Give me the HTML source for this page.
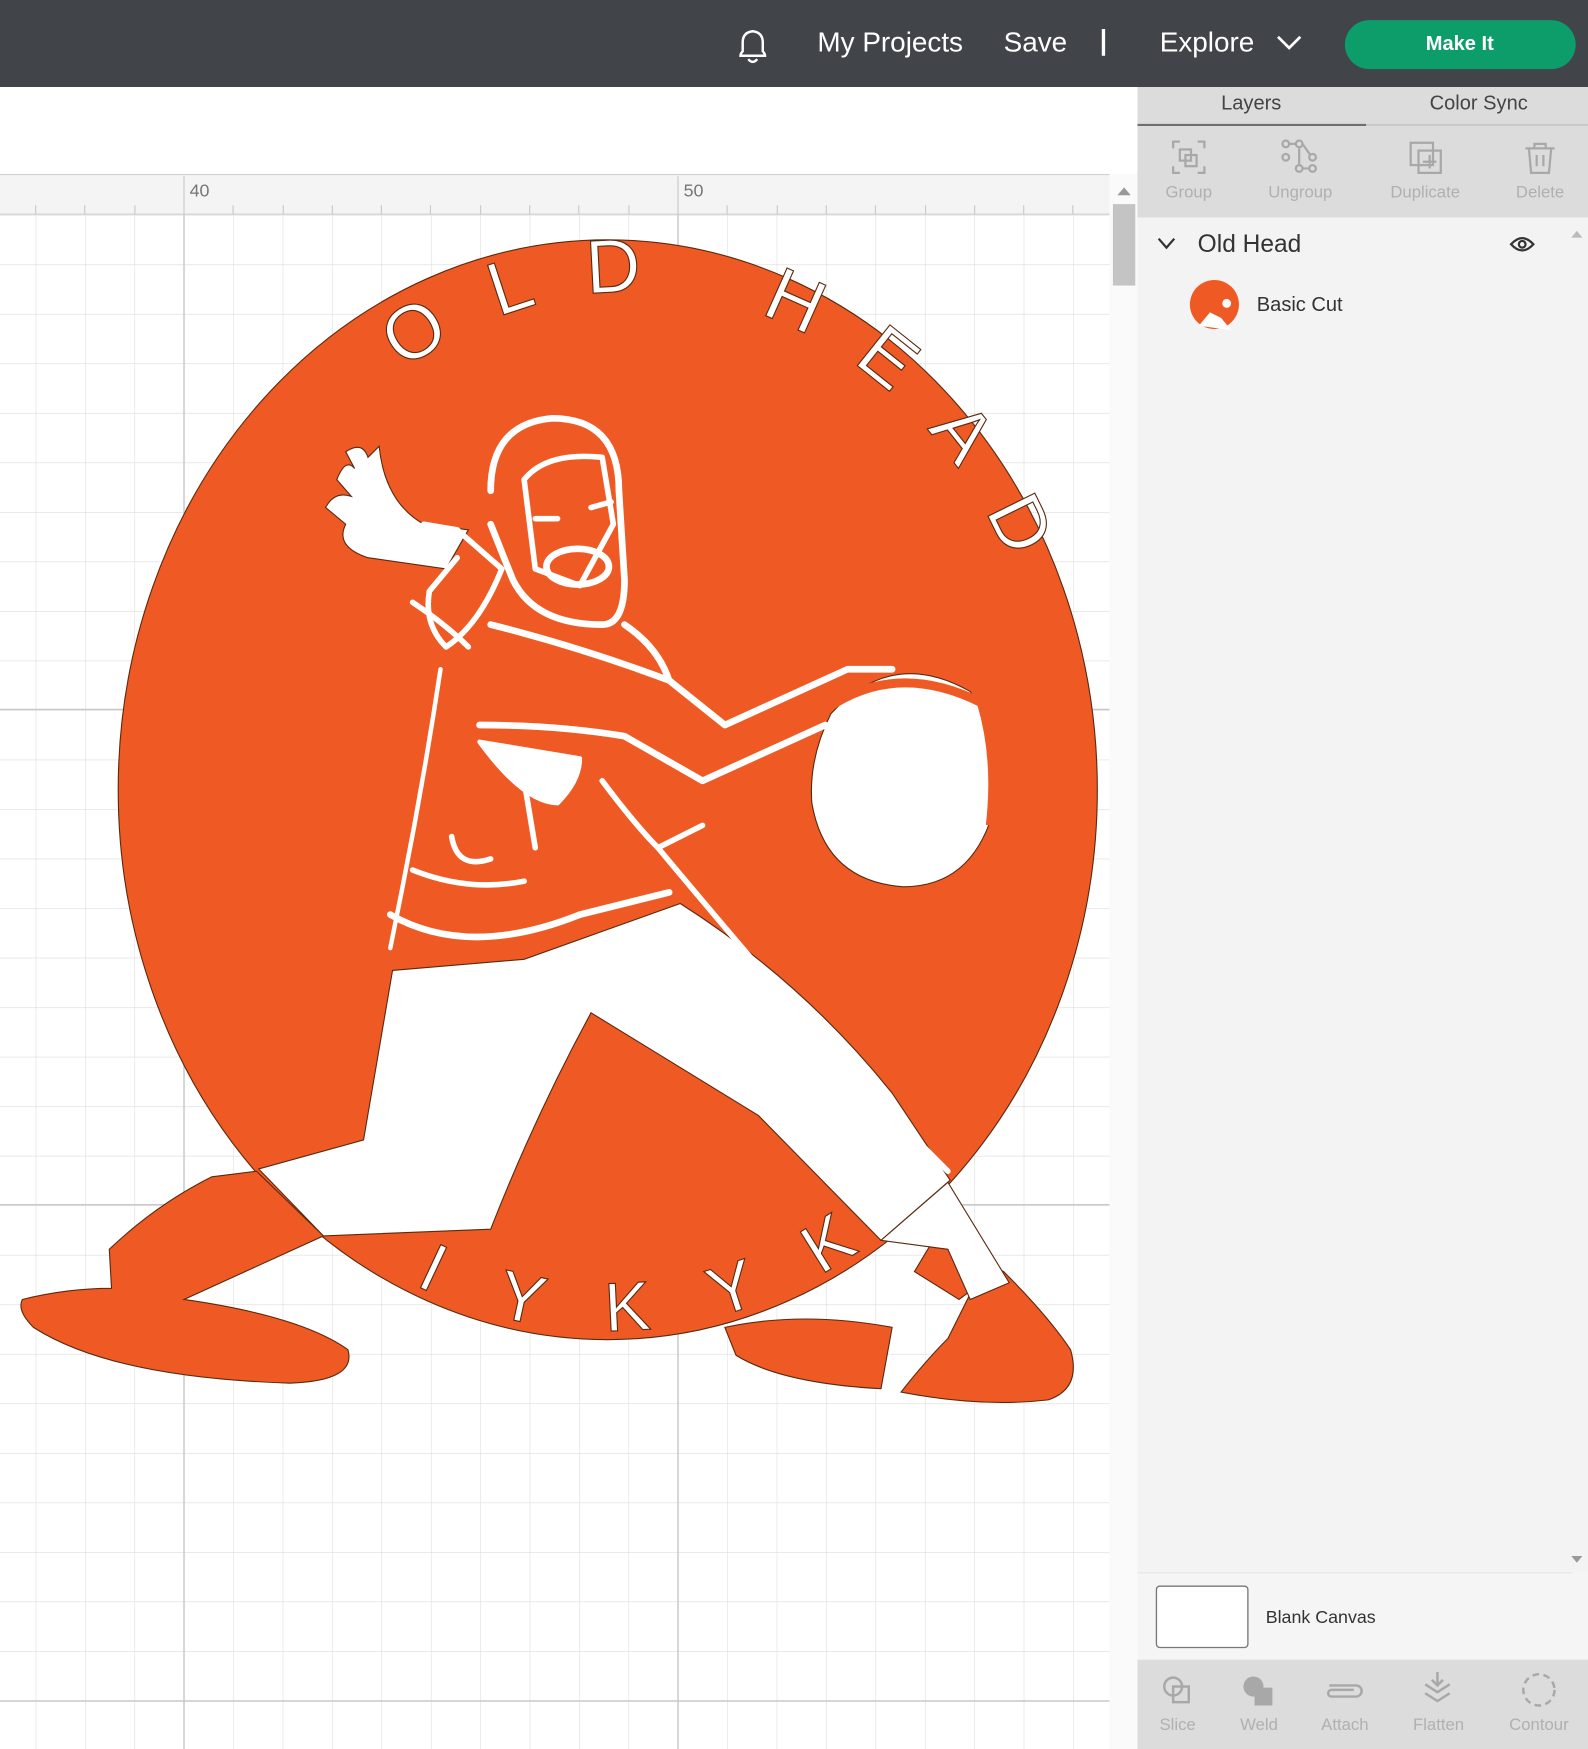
<!DOCTYPE html>
<html><head><style>
html,body{margin:0;padding:0;width:1588px;height:1749px;overflow:hidden;background:#fff}
svg{display:block}
text{font-family:"Liberation Sans",sans-serif}
</style></head><body>
<svg width="1588" height="1749" viewBox="0 0 1424 1568" preserveAspectRatio="none" xmlns="http://www.w3.org/2000/svg">
<defs>
<pattern id="g" x="32" y="15" width="44.3" height="44.4" patternUnits="userSpaceOnUse">
<path d="M0 0V44.4M0 0H44.3" stroke="#dcdcdc" stroke-width="1" fill="none"/>
</pattern>
<path id="arcTop" d="M362 332 A375 430 0 0 1 925 560"/>
<path id="arcBot" d="M372 1152 A430 485 0 0 0 775 1118"/>
</defs>
<rect x="0" y="78" width="1020" height="1490" fill="#fff"/>
<rect x="0" y="192" width="995" height="1376" fill="url(#g)"/>
<g stroke="#c8c8c8" stroke-width="1.3">
<line x1="165" y1="156" x2="165" y2="1568"/><line x1="608" y1="156" x2="608" y2="1568"/>
<line x1="0" y1="636" x2="995" y2="636"/><line x1="0" y1="1080" x2="995" y2="1080"/><line x1="0" y1="1525" x2="995" y2="1525"/>
</g>
<rect x="0" y="156" width="995" height="36" fill="#f4f4f4"/>
<line x1="0" y1="156.5" x2="995" y2="156.5" stroke="#d0d0d0"/>
<line x1="0" y1="192" x2="995" y2="192" stroke="#d0d0d0"/>
<g stroke="#c8c8c8"><line x1="32" y1="184" x2="32" y2="192"/><line x1="76" y1="184" x2="76" y2="192"/><line x1="121" y1="184" x2="121" y2="192"/><line x1="165" y1="158" x2="165" y2="192"/><line x1="209" y1="184" x2="209" y2="192"/><line x1="254" y1="184" x2="254" y2="192"/><line x1="298" y1="184" x2="298" y2="192"/><line x1="342" y1="184" x2="342" y2="192"/><line x1="386" y1="184" x2="386" y2="192"/><line x1="431" y1="184" x2="431" y2="192"/><line x1="475" y1="184" x2="475" y2="192"/><line x1="519" y1="184" x2="519" y2="192"/><line x1="564" y1="184" x2="564" y2="192"/><line x1="608" y1="158" x2="608" y2="192"/><line x1="652" y1="184" x2="652" y2="192"/><line x1="697" y1="184" x2="697" y2="192"/><line x1="741" y1="184" x2="741" y2="192"/><line x1="785" y1="184" x2="785" y2="192"/><line x1="830" y1="184" x2="830" y2="192"/><line x1="874" y1="184" x2="874" y2="192"/><line x1="918" y1="184" x2="918" y2="192"/><line x1="962" y1="184" x2="962" y2="192"/></g>
<text x="170" y="176" font-size="16" fill="#777">40</text>
<text x="613" y="176" font-size="16" fill="#777">50</text>
<rect x="995" y="156" width="25" height="1412" fill="#fafafa"/>
<rect x="998" y="183" width="20" height="73" fill="#c4c4c4"/>
<path d="M1002 175 L1008 168 L1014 175Z" fill="#999"/>

<g stroke="#5a2a10" stroke-width="1">
<ellipse cx="545" cy="708" rx="439" ry="493" fill="#ef5a24"/>
<path d="M20 1165 Q60 1155 100 1155 L98 1120 Q140 1080 190 1055 L230 1050 L290 1108 L165 1165 Q270 1180 312 1210 Q320 1238 260 1240 Q100 1235 30 1190 Q15 1175 20 1165Z" fill="#ef5a24"/>
<path d="M650 1190 Q720 1175 800 1190 L790 1245 Q700 1240 660 1215Z" fill="#ef5a24"/>
<path d="M808 1248 Q830 1220 850 1200 L870 1160 L860 1120 L900 1140 Q940 1180 960 1210 Q970 1245 940 1255 Q880 1262 808 1248Z" fill="#ef5a24"/>
<path d="M820 1140 L850 1090 L880 1150 L860 1165Z" fill="#ef5a24"/>
</g>
<path d="M352 870 L326 1022 L232 1048 L290 1108 L440 1102 Q480 1000 530 908 L680 1000 L790 1112 L852 1058 L800 980 Q720 880 610 810 L470 860Z" fill="#fff" stroke="#5a2a10" stroke-width="1"/>
<path d="M790 1112 L850 1060 L905 1150 L870 1165 L850 1120Z" fill="#fff" stroke="#5a2a10"/>
<path d="M745 640 Q800 580 870 620 Q900 660 890 730 Q870 795 810 795 Q740 790 728 720 Q725 680 745 640Z" fill="#fff" stroke="#5a2a10"/>
<path d="M735 640 Q800 590 880 630 Q895 680 888 740" fill="none" stroke="#ef5a24" stroke-width="8"/>
<path d="M340 400 Q345 450 380 470 L420 475 L400 510 L330 500 Q300 490 310 470 L292 455 Q300 440 315 445 L302 430 Q310 410 318 420 L310 405 Q325 395 330 410Z" fill="#fff" stroke="#5a2a10"/>
<g fill="none" stroke="#fff" stroke-linecap="round" stroke-linejoin="round">
<path d="M440 440 Q440 380 495 375 Q555 375 555 440 L560 520 Q560 560 540 560 Q480 560 460 520 L440 470" stroke-width="6"/>
<path d="M470 430 Q490 405 540 410 L550 470 L520 525 L480 510Z" stroke-width="5"/>
<ellipse cx="518" cy="508" rx="28" ry="16" stroke-width="6"/>
<path d="M480 465 L500 465 M530 455 L548 450" stroke-width="5"/>
<path d="M380 470 L410 475 L450 510 Q430 560 400 580 Q380 560 385 530 L410 500" stroke-width="5"/>
<path d="M440 560 Q520 580 600 610 L650 650 L760 600 L800 600" stroke-width="6"/>
<path d="M430 650 Q500 650 560 660 L630 700 L740 650" stroke-width="6"/>
<path d="M560 560 Q590 580 600 610" stroke-width="6"/>
<path d="M395 600 Q380 700 360 800 L350 850" stroke-width="4"/>
<path d="M430 665 Q470 720 500 720 Q520 700 520 680 Z" fill="#fff" stroke-width="4"/>
<path d="M540 700 Q570 740 590 760 L630 740" stroke-width="5"/>
<path d="M350 820 Q420 860 520 820 L600 800" stroke-width="6"/>
<path d="M370 780 Q420 800 470 790" stroke-width="5"/>
<path d="M405 750 Q410 780 440 770 M470 700 L480 760" stroke-width="5"/>
<path d="M590 760 Q640 820 700 890 Q760 960 850 1050" stroke-width="5"/>
<path d="M370 540 Q400 560 420 580" stroke-width="5"/>
</g>
<g font-size="68" fill="#fff" stroke="#5a2a10" stroke-width="1">
<text><textPath href="#arcTop" textLength="660" lengthAdjust="spacing">OLD HEAD</textPath></text>
</g>
<g font-size="62" fill="#fff" stroke="#5a2a10" stroke-width="1">
<text><textPath href="#arcBot" textLength="420" lengthAdjust="spacing">IYKYK</textPath></text>
</g>

<rect x="0" y="0" width="1424" height="78" fill="#414449"/>
<path d="M664 50 Q664 48 666 46 L666 38 Q666 29 675 28 Q684 29 684 38 L684 46 Q686 48 686 50Z M671 53 Q675 58 679 53" fill="none" stroke="#fff" stroke-width="2.2"/>
<text x="733" y="46" font-size="25" fill="#fff">My Projects</text>
<text x="900" y="46" font-size="25" fill="#fff">Save</text>
<rect x="988" y="26" width="3" height="24" fill="#fff"/>
<text x="1040" y="46" font-size="25" fill="#fff">Explore</text>
<path d="M1146 33 L1156 43 L1166 33" fill="none" stroke="#fff" stroke-width="2.5"/>
<rect x="1206" y="18" width="207" height="44" rx="22" fill="#0c9d6b"/>
<text x="1309" y="45" font-size="18" font-weight="bold" fill="#fff" text-anchor="middle">Make It</text>

<rect x="1020" y="78" width="404" height="1490" fill="#f3f3f3"/>
<rect x="1020" y="78" width="404" height="117" fill="#dcdcdc"/>
<line x1="1020" y1="112" x2="1424" y2="112" stroke="#c4c4c4" stroke-width="1.5"/>
<line x1="1020" y1="112" x2="1225" y2="112" stroke="#707070" stroke-width="2"/>
<text x="1122" y="98" font-size="18" fill="#444" text-anchor="middle">Layers</text>
<text x="1326" y="98" font-size="18" fill="#444" text-anchor="middle">Color Sync</text>
<g fill="none" stroke="#a8a8a8" stroke-width="2">
<path d="M1052 133v-6h6M1074 127h6v6M1080 149v6h-6M1058 155h-6v-6"/><rect x="1058" y="134" width="10" height="10"/><rect x="1063" y="139" width="10" height="10"/>
<circle cx="1153" cy="129" r="3"/><circle cx="1165" cy="129" r="3"/><circle cx="1177" cy="141" r="3"/><circle cx="1165" cy="151" r="3"/><circle cx="1177" cy="151" r="3"/><circle cx="1153" cy="141" r="3"/><path d="M1156 129h6M1168 129L1175 139M1165 148v-15M1168 151h6"/>
<rect x="1265" y="128" width="20" height="20"/><rect x="1272" y="135" width="20" height="20"/><path d="M1282 139v12M1276 145h12"/>
<path d="M1368 133h26M1376 133v-4h10v4M1371 133l2 22h16l2-22M1378 139v10M1384 139v10"/>
</g>
<g font-size="15" fill="#b0b0b0" text-anchor="middle">
<text x="1066" y="177">Group</text><text x="1166" y="177">Ungroup</text><text x="1278" y="177">Duplicate</text><text x="1381" y="177">Delete</text>
</g>
<path d="M1039 214 L1046 222 L1053 214" fill="none" stroke="#333" stroke-width="2"/>
<text x="1074" y="226" font-size="22" fill="#333">Old Head</text>
<path d="M1355 219 Q1365 208 1375 219 Q1365 230 1355 219Z" fill="none" stroke="#333" stroke-width="2"/><circle cx="1365" cy="219" r="3" fill="none" stroke="#333" stroke-width="2"/>
<path d="M1409 213 L1414 207 L1419 213Z" fill="#bbb"/>
<path d="M1409 1395 L1414 1401 L1419 1395Z" fill="#999"/>
<circle cx="1089" cy="273" r="22" fill="#ef5a24"/>
<path d="M1075 292 L1085 280 L1095 285 L1104 296 Z" fill="#fff"/>
<circle cx="1100" cy="272" r="4" fill="#fff"/>
<text x="1127" y="279" font-size="18" fill="#333">Basic Cut</text>
<rect x="1020" y="1410" width="404" height="78" fill="#f5f5f5"/>
<line x1="1020" y1="1410" x2="1410" y2="1410" stroke="#e4e4e4"/>
<rect x="1037" y="1422" width="82" height="55" rx="3" fill="#fff" stroke="#777" stroke-width="1.2"/>
<text x="1135" y="1455" font-size="16" fill="#333">Blank Canvas</text>
<rect x="1020" y="1488" width="404" height="80" fill="#dcdcdc"/>
<g fill="none" stroke="#a8a8a8" stroke-width="2.2">
<circle cx="1052" cy="1512" r="8"/><rect x="1052" y="1512" width="14" height="14"/>
<path d="M1192 1511h24a5 5 0 0 1 0 10h-22a3 3 0 0 1 0-6h20"/>
<path d="M1289 1499v12M1284 1506l5 5 5-5M1278 1510l11 7 11-7M1278 1518l11 7 11-7"/>
<circle cx="1380" cy="1515" r="14" stroke-dasharray="6 4"/>
</g>
<circle cx="1124" cy="1512" r="9" fill="#a8a8a8"/><rect x="1125" y="1513" width="16" height="16" fill="#a8a8a8"/>
<g font-size="15" fill="#b0b0b0" text-anchor="middle">
<text x="1056" y="1551">Slice</text><text x="1129" y="1551">Weld</text><text x="1206" y="1551">Attach</text><text x="1290" y="1551">Flatten</text><text x="1380" y="1551">Contour</text>
</g>
</svg>
</body></html>
